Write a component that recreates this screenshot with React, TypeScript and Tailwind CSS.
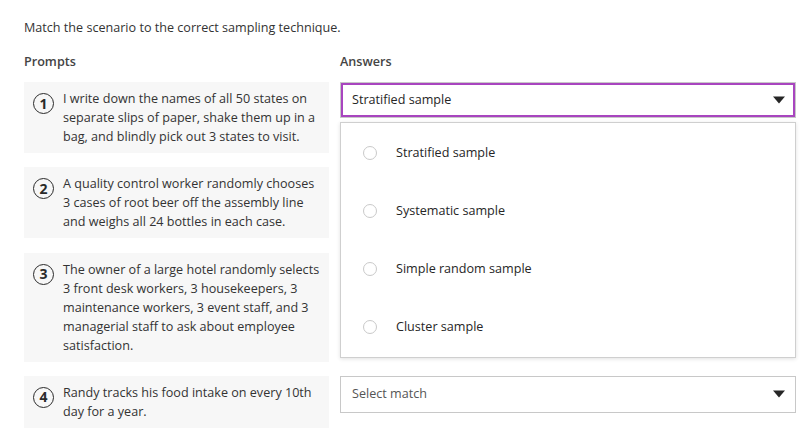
const prompts: { n: number; text: string }[] = [
  { n: 1, text: "I write down the names of all 50 states on separate slips of paper, shake them up in a bag, and blindly pick out 3 states to visit." },
  { n: 2, text: "A quality control worker randomly chooses 3 cases of root beer off the assembly line and weighs all 24 bottles in each case." },
  { n: 3, text: "The owner of a large hotel randomly selects 3 front desk workers, 3 housekeepers, 3 maintenance workers, 3 event staff, and 3 managerial staff to ask about employee satisfaction." },
  { n: 4, text: "Randy tracks his food intake on every 10th day for a year." },
];

const options = ["Stratified sample", "Systematic sample", "Simple random sample", "Cluster sample"];

function Caret() {
  return (
    <svg width="12" height="8" viewBox="0 0 12 8" className="shrink-0">
      <path d="M0 0.5 H12 L6 7.5 Z" fill="#262626" />
    </svg>
  );
}

function PromptBox({ n, text }: { n: number; text: string }) {
  return (
    <div className="flex items-start gap-[9px] bg-[#f7f7f7] pl-[9px] pr-[6px] py-[7px]">
      <div className="mt-[4px] flex h-[21px] w-[21px] shrink-0 items-center justify-center rounded-full border-[1.5px] border-[#2a2a2a] text-[14px] font-bold leading-none text-[#2a2a2a]">
        {n}
      </div>
      <p className="text-[12.6px] leading-[19px] text-[#333]">{text}</p>
    </div>
  );
}

export default function App() {
  return (
    <div className="min-h-screen bg-white pl-6 pr-[6px] pt-[18px] text-[#333]" style={{ fontFamily: "'Open Sans', 'Noto Sans', sans-serif" }}>
      <p className="text-[12.6px] leading-[19px]">Match the scenario to the correct sampling technique.</p>

      <div className="mt-[15px] grid grid-cols-[305px_1fr] gap-x-[11px]">
        <h3 className="text-[12.6px] font-semibold leading-[19px] text-[#444]">Prompts</h3>
        <h3 className="text-[12.6px] font-semibold leading-[19px] text-[#444]">Answers</h3>
      </div>

      <div className="mt-[11px] grid grid-cols-[305px_1fr] gap-x-[11px] gap-y-[14.3px]">
        {prompts.map((p, i) => (
          <div key={p.n} className="contents">
            <PromptBox n={p.n} text={p.text} />
            <div className="relative">
              {i === 0 && (
                <>
                  <div className="flex h-[36px] items-center justify-between border border-[#c8c8c8] pl-[11px] pr-[10px] shadow-[inset_0_0_0_2px_#a845bf]">
                    <span className="text-[12.6px] text-[#262626]">Stratified sample</span>
                    <Caret />
                  </div>
                  <div className="absolute left-0 right-0 top-[40px] z-10 border border-[#cfcfcf] bg-white py-[1px] shadow-[0_1px_4px_rgba(0,0,0,0.12)]">
                    {options.map((o) => (
                      <div key={o} className="flex h-[58px] items-center pl-[22px]">
                        <span className="h-[14px] w-[14px] rounded-full border border-[#c9c9c9] bg-white" />
                        <span className="ml-[19px] text-[12.6px] text-[#262626]">{o}</span>
                      </div>
                    ))}
                  </div>
                </>
              )}
              {i === 3 && (
                <div className="flex h-[37px] items-center justify-between border border-[#c8c8c8] pl-[11px] pr-[10px]">
                  <span className="text-[12.6px] text-[#555]">Select match</span>
                  <Caret />
                </div>
              )}
            </div>
          </div>
        ))}
      </div>
    </div>
  );
}
